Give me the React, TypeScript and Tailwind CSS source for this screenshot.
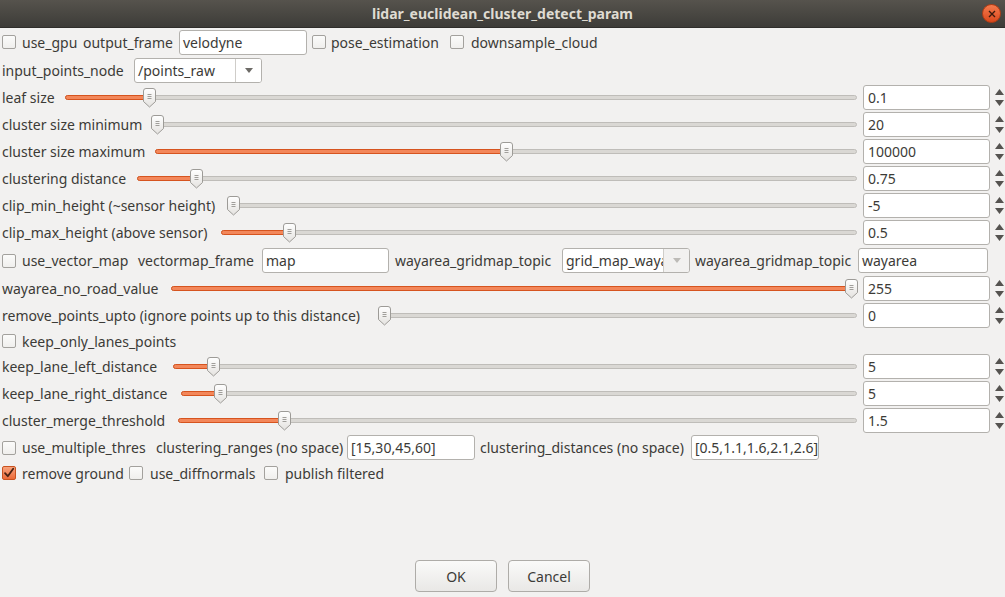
import React from "react";

const FONT = "font-['Noto_Sans',sans-serif]";

function Check({ checked = false }: { checked?: boolean }) {
  if (checked) {
    return (
      <span className="inline-flex items-center justify-center w-[14px] h-[14px] rounded-[2px] border border-[#c9521f] bg-gradient-to-b from-[#f7a27c] to-[#ec6a37] shrink-0">
        <svg width="12" height="12" viewBox="0 0 12 12">
          <path d="M2 6.2 L4.8 9.2 L10.2 1.8" fill="none" stroke="#4a2212" strokeWidth="1.8" strokeLinecap="round" strokeLinejoin="round" />
        </svg>
      </span>
    );
  }
  return <span className="inline-block w-[14px] h-[14px] rounded-[2px] border border-[#a3a19d] bg-gradient-to-b from-[#fbfbfa] to-[#f0efed] shrink-0" />;
}

function TextBox({ value, w }: { value: string; w: string }) {
  return (
    <div className={`${w} h-[25px] bg-white border border-[#b3b1ad] rounded-[3px] flex items-center pl-[3px] overflow-hidden whitespace-nowrap text-[#3c3b37] shrink-0`}>
      {value}
    </div>
  );
}

function Combo({ value, disabledArrow = false }: { value: string; disabledArrow?: boolean }) {
  return (
    <div className="w-[128px] h-[25px] bg-white border border-[#b3b1ad] rounded-[3px] flex items-stretch overflow-hidden shrink-0">
      <div className="flex-1 min-w-0 flex items-center pl-[3px] overflow-hidden whitespace-nowrap text-[#3c3b37]">{value}</div>
      <div className={`w-[26px] shrink-0 border-l border-[#cfcdc9] flex items-center justify-center ${disabledArrow ? "bg-[#f2f1f0]" : "bg-white"}`}>
        <svg width="8" height="5" viewBox="0 0 8 5">
          <path d="M0 0 H8 L4 5 Z" fill={disabledArrow ? "#bdbbb7" : "#6d6b67"} />
        </svg>
      </div>
    </div>
  );
}

function SpinBox({ value }: { value: string }) {
  return (
    <div className="flex items-center shrink-0">
      <div className="w-[127px] h-[25px] bg-white border border-[#b3b1ad] rounded-[3px] flex items-center pl-[4px] text-[#3c3b37]">{value}</div>
      <div className="w-[12px] ml-[3px] flex flex-col items-center gap-[5px]">
        <svg width="9" height="6" viewBox="0 0 9 6"><path d="M0 6 L4.5 0 L9 6 Z" fill="#555350" /></svg>
        <svg width="9" height="6" viewBox="0 0 9 6"><path d="M0 0 H9 L4.5 6 Z" fill="#555350" /></svg>
      </div>
    </div>
  );
}

function Slider({ p }: { p: number }) {
  return (
    <div className="relative flex-1 h-[25px] ml-[7px] mr-[6px]">
      <div className="absolute left-0 right-0 top-[10px] h-[5px] rounded-full bg-[#dad8d4] border border-[#bfbdb9]" />
      {p > 0 && (
        <div
          className="absolute left-0 top-[10px] h-[5px] rounded-full bg-[#f3875a] border border-[#d6541f]"
          style={{ width: `calc(${p} * (100% - 12px) + 6px)` }}
        />
      )}
      <svg className="absolute top-[3px]" style={{ left: `calc(${p} * (100% - 12px))` }} width="13" height="20" viewBox="0 0 13 20">
        <defs>
          <linearGradient id="hg" x1="0" y1="0" x2="0" y2="1">
            <stop offset="0" stopColor="#ffffff" />
            <stop offset="1" stopColor="#e4e2df" />
          </linearGradient>
        </defs>
        <path d="M3 0.5 H10 Q12.5 0.5 12.5 3 V13.5 L6.5 19 L0.5 13.5 V3 Q0.5 0.5 3 0.5 Z" fill="url(#hg)" stroke="#9d9b97" />
        <path d="M4.5 6.5 H8.5 M4.5 8.5 H8.5 M4.5 10.5 H8.5" stroke="#a09e9a" strokeWidth="1" />
      </svg>
    </div>
  );
}

function SliderRow({ label, lw, p, value }: { label: string; lw: string; p: number; value: string }) {
  return (
    <div className="flex items-center h-[25px]">
      <span className={`${lw} shrink-0 whitespace-nowrap`}>{label}</span>
      <Slider p={p} />
      <SpinBox value={value} />
    </div>
  );
}

export default function App() {
  return (
    <div className={`${FONT} w-[1005px] h-[597px] bg-[#f2f1f0] text-[14px] text-[#3c3b37] flex flex-col overflow-hidden`}>
      <div className="h-[28px] shrink-0 bg-gradient-to-b from-[#56534d] to-[#3d3c38] relative flex items-center justify-center border-b border-[#2f2e2b]">
        <span className="font-bold text-[#dfdbd2] text-[14px]">lidar_euclidean_cluster_detect_param</span>
        <span className="absolute right-[4px] top-[4px] w-[19px] h-[19px] rounded-full bg-gradient-to-b from-[#f47a4c] to-[#d9471a] border border-[#b63d14] flex items-center justify-center">
          <svg width="8" height="8" viewBox="0 0 8 8"><path d="M1 1 L7 7 M7 1 L1 7" stroke="#3b1a0d" strokeWidth="1.4" /></svg>
        </span>
      </div>

      <div className="flex flex-col gap-[2px] pl-[2px] pt-[1px]">
        <div className="flex items-center h-[26px] whitespace-nowrap">
          <Check />
          <span className="ml-[6px] w-[57px] shrink-0">use_gpu</span>
          <span className="ml-[4px] w-[93px] shrink-0">output_frame</span>
          <span className="ml-[3px]"><TextBox value="velodyne" w="w-[128px]" /></span>
          <span className="ml-[5px] flex"><Check /></span>
          <span className="ml-[5px] w-[114px] shrink-0">pose_estimation</span>
          <span className="ml-[5px] flex"><Check /></span>
          <span className="ml-[7px]">downsample_cloud</span>
        </div>
        <div className="flex items-center h-[26px] whitespace-nowrap">
          <span className="w-[126px] shrink-0">input_points_node</span>
          <span className="ml-[6px]"><Combo value="/points_raw" /></span>
        </div>
        <SliderRow label="leaf size" lw="w-[56px]" p={0.1} value="0.1" />
        <SliderRow label="cluster size minimum" lw="w-[142px]" p={0} value="20" />
        <SliderRow label="cluster size maximum" lw="w-[146px]" p={0.5} value="100000" />
        <SliderRow label="clustering distance" lw="w-[128px]" p={0.075} value="0.75" />
        <SliderRow label="clip_min_height (~sensor height)" lw="w-[218px]" p={0} value="-5" />
        <SliderRow label="clip_max_height (above sensor)" lw="w-[212px]" p={0.1} value="0.5" />
        <div className="flex items-center h-[27px] whitespace-nowrap">
          <Check />
          <span className="ml-[6px] w-[110px] shrink-0">use_vector_map</span>
          <span className="ml-[6px] w-[120px] shrink-0">vectormap_frame</span>
          <span className="ml-[4px]"><TextBox value="map" w="w-[127px]" /></span>
          <span className="ml-[6px] w-[162px] shrink-0">wayarea_gridmap_topic</span>
          <span className="ml-[5px]"><Combo value="grid_map_wayarea" disabledArrow /></span>
          <span className="ml-[5px] w-[162px] shrink-0">wayarea_gridmap_topic</span>
          <span className="ml-[1px]"><TextBox value="wayarea" w="w-[130px]" /></span>
        </div>
        <SliderRow label="wayarea_no_road_value" lw="w-[162px]" p={1} value="255" />
        <SliderRow label="remove_points_upto (ignore points up to this distance)" lw="w-[369px]" p={0} value="0" />
        <div className="flex items-center h-[22px]">
          <Check />
          <span className="ml-[6px]">keep_only_lanes_points</span>
        </div>
        <SliderRow label="keep_lane_left_distance" lw="w-[164px]" p={0.05} value="5" />
        <SliderRow label="keep_lane_right_distance" lw="w-[172px]" p={0.05} value="5" />
        <SliderRow label="cluster_merge_threshold" lw="w-[169px]" p={0.15} value="1.5" />
        <div className="flex items-center h-[25px] whitespace-nowrap">
          <Check />
          <span className="ml-[6px] w-[129px] shrink-0">use_multiple_thres</span>
          <span className="ml-[5px] w-[188px] shrink-0">clustering_ranges (no space)</span>
          <span className="ml-[3px]"><TextBox value="[15,30,45,60]" w="w-[128px]" /></span>
          <span className="ml-[5px] w-[208px] shrink-0">clustering_distances (no space)</span>
          <span className="ml-[3px]"><TextBox value="[0.5,1.1,1.6,2.1,2.6]" w="w-[128px]" /></span>
        </div>
        <div className="flex items-center h-[22px] whitespace-nowrap">
          <Check checked />
          <span className="ml-[6px] w-[101px] shrink-0">remove ground</span>
          <span className="ml-[6px] flex"><Check /></span>
          <span className="ml-[7px] w-[108px] shrink-0">use_diffnormals</span>
          <span className="ml-[6px] flex"><Check /></span>
          <span className="ml-[7px]">publish filtered</span>
        </div>
      </div>

      <div className="flex-1" />
      <div className="flex justify-center gap-[11px] pb-[5px]">
        <button className="w-[82px] h-[32px] rounded-[4px] border border-[#aeaca8] bg-gradient-to-b from-[#fafaf9] to-[#e9e8e6] text-[#3c3b37]">OK</button>
        <button className="w-[82px] h-[32px] rounded-[4px] border border-[#aeaca8] bg-gradient-to-b from-[#fafaf9] to-[#e9e8e6] text-[#3c3b37]">Cancel</button>
      </div>
    </div>
  );
}
